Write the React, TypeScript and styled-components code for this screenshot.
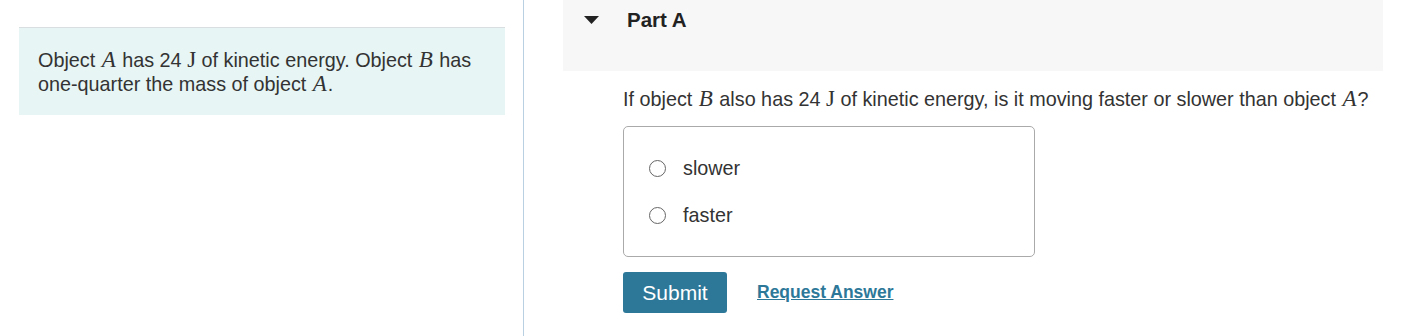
import React from 'react';
import styled, { createGlobalStyle } from 'styled-components';

const GlobalStyle = createGlobalStyle`
    html, body {
        margin: 0;
        padding: 0;
        background: #fff;
    }

    body {
        font-family: 'Liberation Sans', Arial, sans-serif;
        color: #333;
    }
`;

const Page = styled.div`
    display: flex;
    width: 1405px;
    height: 336px;
    overflow: hidden;
`;

// <LEFT>
const LeftColumn = styled.div`
    width: 524px;
    flex-shrink: 0;
    padding-top: 27px;
    box-sizing: border-box;
    border-right: 1px solid #b9d0e2;
`;

const Intro = styled.div`
    margin-left: 19px;
    width: 486px;
    box-sizing: border-box;
    background: #e7f5f5;
    border-top: 1px solid #d9dfe0;
    padding: 20px 19px 19px;
    font-size: 19.8px;
    line-height: 24px;
`;

const MathVar = styled.span`
    font-family: 'Liberation Serif', 'Times New Roman', serif;
    font-style: italic;
    font-size: 23px;
    line-height: 1;
    margin: 0 1px;
`;

const MathUnit = styled.span`
    font-family: 'Liberation Serif', 'Times New Roman', serif;
    font-size: 23px;
    line-height: 1;
`;
// </LEFT>

// <RIGHT>
const RightColumn = styled.div`
    flex: 1;
    padding-left: 39px;
    padding-right: 22px;
`;

const PartHeader = styled.div`
    display: flex;
    align-items: flex-start;
    height: 71px;
    background: #f7f7f7;
    padding-top: 9px;
    box-sizing: border-box;
`;

const Caret = styled.svg`
    width: 15px;
    height: 8px;
    margin: 7px 0 0 21px;
    fill: #222;
`;

const PartTitle = styled.span`
    margin-left: 28px;
    font-size: 20.5px;
    font-weight: bold;
    line-height: 22px;
    color: #222;
`;

const PartBody = styled.div`
    padding-left: 60px;
`;

const Question = styled.p`
    margin: 16px 0 0;
    font-size: 19.8px;
    line-height: 24px;
`;

const Options = styled.div`
    margin-top: 15px;
    width: 412px;
    height: 131px;
    box-sizing: border-box;
    border: 1px solid #aaa;
    border-radius: 5px;
    padding: 30px 0 0 24px;
    display: flex;
    flex-direction: column;
    gap: 25px;
`;

const Option = styled.label`
    display: flex;
    align-items: center;
    gap: 17px;
    height: 22px;
    font-size: 19.8px;
    cursor: pointer;
`;

const Radio = styled.span`
    width: 17px;
    height: 17px;
    border: 1.5px solid #666;
    border-radius: 50%;
    box-sizing: border-box;
    margin-left: 1px;
    background: #fff;
`;

const Actions = styled.div`
    display: flex;
    align-items: center;
    gap: 30px;
    margin-top: 15px;
`;

const SubmitButton = styled.button`
    height: 41px;
    width: 104px;
    border: none;
    border-radius: 3px;
    background: #2d7899;
    color: #fff;
    font-family: 'Liberation Sans', Arial, sans-serif;
    font-size: 21px;
    cursor: pointer;
`;

const RequestLink = styled.a`
    font-size: 17.5px;
    font-weight: bold;
    color: #2d7899;
    text-decoration: underline;
    cursor: pointer;
`;
// </RIGHT>

export default function App() {
    return (
        <>
            <GlobalStyle />
            <Page>
                <LeftColumn>
                    <Intro>
                        Object <MathVar>A</MathVar> has 24 <MathUnit>J</MathUnit> of kinetic energy. Object{' '}
                        <MathVar>B</MathVar> has one-quarter the mass of object <MathVar>A</MathVar>.
                    </Intro>
                </LeftColumn>

                <RightColumn>
                    <PartHeader>
                        <Caret viewBox="0 0 15 8">
                            <path d="M0 0 H15 L7.5 8 Z" />
                        </Caret>
                        <PartTitle>Part A</PartTitle>
                    </PartHeader>

                    <PartBody>
                        <Question>
                            If object <MathVar>B</MathVar> also has 24 <MathUnit>J</MathUnit> of kinetic energy, is it
                            moving faster or slower than object <MathVar>A</MathVar>?
                        </Question>

                        <Options>
                            <Option>
                                <Radio />
                                slower
                            </Option>
                            <Option>
                                <Radio />
                                faster
                            </Option>
                        </Options>

                        <Actions>
                            <SubmitButton>Submit</SubmitButton>
                            <RequestLink>Request Answer</RequestLink>
                        </Actions>
                    </PartBody>
                </RightColumn>
            </Page>
        </>
    );
}
